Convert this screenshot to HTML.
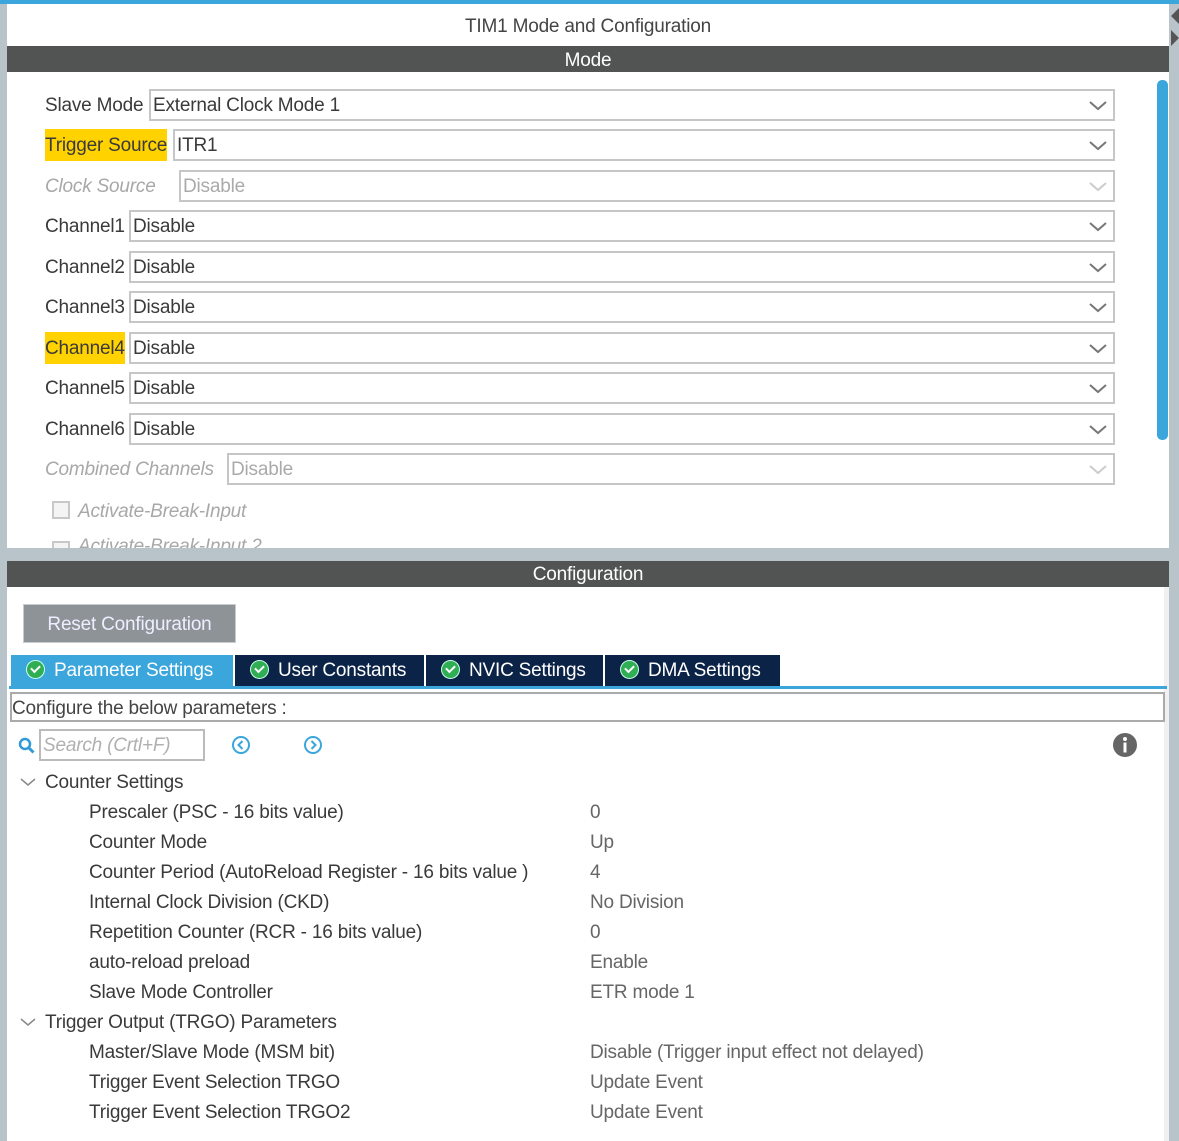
<!DOCTYPE html>
<html><head><meta charset="utf-8"><style>
*{margin:0;padding:0;box-sizing:border-box}
body{width:1179px;height:1141px;position:relative;overflow:hidden;background:#b9c4ca;font-family:"Liberation Sans",sans-serif;font-size:19px;color:#3a3a3a;letter-spacing:-0.2px}
.a{position:absolute;white-space:nowrap}
.lbl{position:absolute;height:32px;line-height:34px}
.sel{position:absolute;height:32px;line-height:30px;border:2px solid #c4c6c8;padding-left:2px;background:#fff;right:64px}
.sel svg{position:absolute;right:6px;top:9px}
.dis{color:#a8a8a8;font-style:italic}
.hl{background:#ffd200}
.tr{position:absolute;height:30px;line-height:32px}
.v{color:#666}
.tab{position:absolute;top:655px;height:32px;line-height:31px;color:#fff;background:#0b2346;padding-left:16px}
.ck{display:inline-block;width:17px;height:17px;border-radius:50%;background:#2fae54;vertical-align:-2px;margin-right:10px;position:relative;box-shadow:0 0 0 1px #cfe;}
.ck:after{content:"";position:absolute;left:4px;top:4px;width:7px;height:4px;border-left:2px solid #fff;border-bottom:2px solid #fff;transform:rotate(-45deg)}
</style></head><body>
<div class="a" style="left:0;top:0;width:1179px;height:4px;background:#3aa6dc"></div>
<div class="a" style="left:7px;top:4px;width:1162px;height:544px;background:#fff"></div>
<div class="a" style="left:0;top:4px;width:1162px;height:40px;line-height:46px;text-align:center;left:7px;color:#444">TIM1 Mode and Configuration</div>
<div class="a" style="left:7px;top:46px;width:1162px;height:26px;background:#525453;color:#fff;text-align:center;line-height:30px">Mode</div>
<div class="a" style="left:1157px;top:80px;width:11px;height:360px;background:#3aa6dc;border-radius:5px"></div>
<svg class="a" style="left:1170px;top:4px" width="9" height="46"><polygon points="9,4 1,12 9,20" fill="#555"/><polygon points="1,26 9,34 1,42" fill="#555"/></svg>

<div class="lbl" style="left:45px;top:89px">Slave Mode</div>
<div class="sel" style="left:149px;top:89px;width:966px">External Clock Mode 1<svg width="18" height="12"><path d="M1 2l8 7 8-7" fill="none" stroke="#777" stroke-width="2"/></svg></div>
<div class="lbl hl" style="left:45px;top:129px">Trigger Source</div>
<div class="sel" style="left:173px;top:129px;width:942px">ITR1<svg width="18" height="12"><path d="M1 2l8 7 8-7" fill="none" stroke="#777" stroke-width="2"/></svg></div>
<div class="lbl dis" style="left:45px;top:170px">Clock Source</div>
<div class="sel" style="left:179px;top:170px;width:936px;color:#aaa">Disable<svg width="18" height="12"><path d="M1 2l8 7 8-7" fill="none" stroke="#ccc" stroke-width="2"/></svg></div>
<div class="lbl" style="left:45px;top:210px">Channel1</div>
<div class="sel" style="left:129px;top:210px;width:986px">Disable<svg width="18" height="12"><path d="M1 2l8 7 8-7" fill="none" stroke="#777" stroke-width="2"/></svg></div>
<div class="lbl" style="left:45px;top:251px">Channel2</div>
<div class="sel" style="left:129px;top:251px;width:986px">Disable<svg width="18" height="12"><path d="M1 2l8 7 8-7" fill="none" stroke="#777" stroke-width="2"/></svg></div>
<div class="lbl" style="left:45px;top:291px">Channel3</div>
<div class="sel" style="left:129px;top:291px;width:986px">Disable<svg width="18" height="12"><path d="M1 2l8 7 8-7" fill="none" stroke="#777" stroke-width="2"/></svg></div>
<div class="lbl hl" style="left:45px;top:332px">Channel4</div>
<div class="sel" style="left:129px;top:332px;width:986px">Disable<svg width="18" height="12"><path d="M1 2l8 7 8-7" fill="none" stroke="#777" stroke-width="2"/></svg></div>
<div class="lbl" style="left:45px;top:372px">Channel5</div>
<div class="sel" style="left:129px;top:372px;width:986px">Disable<svg width="18" height="12"><path d="M1 2l8 7 8-7" fill="none" stroke="#777" stroke-width="2"/></svg></div>
<div class="lbl" style="left:45px;top:413px">Channel6</div>
<div class="sel" style="left:129px;top:413px;width:986px">Disable<svg width="18" height="12"><path d="M1 2l8 7 8-7" fill="none" stroke="#777" stroke-width="2"/></svg></div>
<div class="lbl dis" style="left:45px;top:453px">Combined Channels</div>
<div class="sel" style="left:227px;top:453px;width:888px;color:#aaa">Disable<svg width="18" height="12"><path d="M1 2l8 7 8-7" fill="none" stroke="#ccc" stroke-width="2"/></svg></div>
<div class="a" style="left:52px;top:501px;width:18px;height:18px;border:2px solid #c8c8c8;background:#f4f4f4"></div>
<div class="lbl dis" style="left:78px;top:495px">Activate-Break-Input</div>
<div class="a" style="left:7px;top:536px;width:1150px;height:12px;overflow:hidden">
<div class="a" style="left:45px;top:5px;width:18px;height:18px;border:2px solid #c8c8c8;background:#f4f4f4"></div>
<div class="a dis" style="left:71px;top:0px">Activate-Break-Input 2</div></div>

<div class="a" style="left:7px;top:561px;width:1162px;height:580px;background:#fff"></div>
<div class="a" style="left:1164px;top:587px;width:5px;height:554px;background:#f0f0f2"></div>
<div class="a" style="left:7px;top:561px;width:1162px;height:26px;background:#525453;color:#fff;text-align:center;line-height:28px">Configuration</div>
<div class="a" style="left:23px;top:604px;width:213px;height:39px;background:#8e9397;border:1px solid #c9cccf;color:#eef;text-align:center;line-height:40px">Reset Configuration</div>
<div class="tab" style="left:11px;width:222px;background:#3aa6dc"><span class="ck"></span>Parameter Settings</div>
<div class="tab" style="left:235px;width:189px"><span class="ck"></span>User Constants</div>
<div class="tab" style="left:426px;width:177px"><span class="ck"></span>NVIC Settings</div>
<div class="tab" style="left:605px;width:175px"><span class="ck"></span>DMA Settings</div>
<div class="a" style="left:9px;top:686px;width:1158px;height:3px;background:#3aa6dc"></div>
<div class="a" style="left:10px;top:692px;width:1155px;height:30px;border:2px solid #aaa;line-height:29px;color:#444">Configure the below parameters :</div>
<svg class="a" style="left:18px;top:737px" width="18" height="18"><circle cx="7" cy="7" r="5" fill="none" stroke="#2f9ad6" stroke-width="2.5"/><path d="M10.5 10.5l5 5" stroke="#2f9ad6" stroke-width="3"/></svg>
<div class="a" style="left:39px;top:729px;width:166px;height:32px;border:2px solid #bbb;line-height:30px;color:#b0b0b0;font-style:italic;padding-left:2px">Search (Crtl+F)</div>
<svg class="a" style="left:231px;top:735px" width="20" height="20"><circle cx="10" cy="10" r="8" fill="none" stroke="#3aa6dc" stroke-width="2"/><path d="M11.5 6l-4 4 4 4" fill="none" stroke="#3aa6dc" stroke-width="2"/></svg>
<svg class="a" style="left:303px;top:735px" width="20" height="20"><circle cx="10" cy="10" r="8" fill="none" stroke="#3aa6dc" stroke-width="2"/><path d="M8.5 6l4 4-4 4" fill="none" stroke="#3aa6dc" stroke-width="2"/></svg>
<svg class="a" style="left:1112px;top:732px" width="26" height="26"><circle cx="13" cy="13" r="12" fill="#666"/><circle cx="13" cy="7" r="2" fill="#fff"/><rect x="11.5" y="10.5" width="3" height="10" fill="#fff"/></svg>

<svg class="a" style="left:20px;top:776px" width="16" height="12"><path d="M1 3l7 6 7-6" fill="none" stroke="#888" stroke-width="1.5"/></svg>
<div class="tr" style="left:45px;top:767px">Counter Settings</div>
<div class="tr" style="left:89px;top:797px">Prescaler (PSC - 16 bits value)</div><div class="tr v" style="left:590px;top:797px">0</div>
<div class="tr" style="left:89px;top:827px">Counter Mode</div><div class="tr v" style="left:590px;top:827px">Up</div>
<div class="tr" style="left:89px;top:857px">Counter Period (AutoReload Register - 16 bits value )</div><div class="tr v" style="left:590px;top:857px">4</div>
<div class="tr" style="left:89px;top:887px">Internal Clock Division (CKD)</div><div class="tr v" style="left:590px;top:887px">No Division</div>
<div class="tr" style="left:89px;top:917px">Repetition Counter (RCR - 16 bits value)</div><div class="tr v" style="left:590px;top:917px">0</div>
<div class="tr" style="left:89px;top:947px">auto-reload preload</div><div class="tr v" style="left:590px;top:947px">Enable</div>
<div class="tr" style="left:89px;top:977px">Slave Mode Controller</div><div class="tr v" style="left:590px;top:977px">ETR mode 1</div>
<svg class="a" style="left:20px;top:1016px" width="16" height="12"><path d="M1 3l7 6 7-6" fill="none" stroke="#888" stroke-width="1.5"/></svg>
<div class="tr" style="left:45px;top:1007px">Trigger Output (TRGO) Parameters</div>
<div class="tr" style="left:89px;top:1037px">Master/Slave Mode (MSM bit)</div><div class="tr v" style="left:590px;top:1037px">Disable (Trigger input effect not delayed)</div>
<div class="tr" style="left:89px;top:1067px">Trigger Event Selection TRGO</div><div class="tr v" style="left:590px;top:1067px">Update Event</div>
<div class="tr" style="left:89px;top:1097px">Trigger Event Selection TRGO2</div><div class="tr v" style="left:590px;top:1097px">Update Event</div>
</body></html>
